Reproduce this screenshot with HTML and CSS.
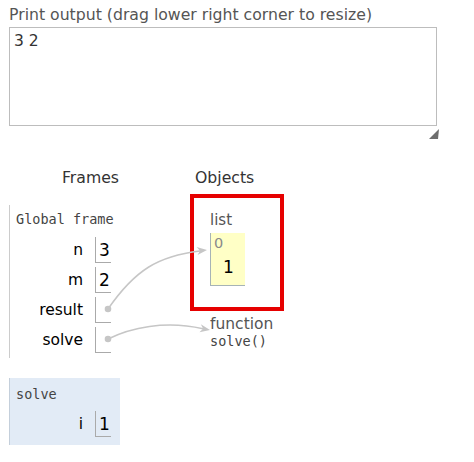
FILE: index.html
```html
<!DOCTYPE html>
<html>
<head>
<meta charset="utf-8">
<link rel="stylesheet" href="styles.css">
</head>
<body>
<div class="page">
  <div class="out-label">Print output (drag lower right corner to resize)</div>
  <div class="out-box">3 2</div>
  <div class="grip-row">
    <svg class="grip" width="10" height="10" viewBox="0 0 10 10"><polygon points="10,0 9,10 0,10" fill="#6e6e6e"/></svg>
  </div>
  <div class="viz">
    <div class="frames-col">
      <div class="col-head frames-head">Frames</div>
      <div class="frame global">
        <div class="frame-head">Global frame</div>
        <div class="vars">
          <div class="name">n</div><div class="val">3</div>
          <div class="name">m</div><div class="val">2</div>
          <div class="name">result</div><div class="val"></div>
          <div class="name">solve</div><div class="val"></div>
        </div>
      </div>
      <div class="frame active">
        <div class="frame-head">solve</div>
        <div class="vars">
          <div class="name">i</div><div class="val">1</div>
        </div>
      </div>
    </div>
    <div class="objects-col">
      <div class="col-head objects-head">Objects</div>
      <div class="highlight">
        <div class="type-label">list</div>
        <div class="list-cell">
          <div class="idx">0</div>
          <div class="elt">1</div>
        </div>
      </div>
      <div class="func">
        <div class="type-label func-label">function</div>
        <div class="func-name">solve()</div>
      </div>
    </div>
  </div>
</div>
<svg class="arrows" width="474" height="462" viewBox="0 0 474 462">
  <g fill="none" stroke="#c6c6c6" stroke-width="1.5">
    <path d="M108,309 C135,270 158,256 200,251"/>
    <path d="M108,339 C130,328 165,320 203,328.8"/>
  </g>
  <g fill="#c6c6c6">
    <circle cx="108" cy="309" r="3.3"/>
    <circle cx="108" cy="339" r="3.3"/>
    <polygon points="207,250 196.6,247.1 200,250.8 197.5,255.1"/>
    <polygon points="210,330 200.85,324.3 203.1,328.8 199.45,332.2"/>
  </g>
</svg>
</body>
</html>
```
FILE: styles.css
```css
html, body {
  margin: 0;
  padding: 0;
  background: #ffffff;
}
body {
  font-family: "DejaVu Sans", Verdana, sans-serif;
  color: #000;
}
.page {
  padding: 6px 0 0 9px;
}
.out-label {
  font-size: 15.7px;
  line-height: 18px;
  color: #555;
}
.out-box {
  margin-top: 3px;
  width: 428px;
  height: 99px;
  box-sizing: border-box;
  border: 1px solid #bdbdbd;
  padding: 4px 3px 4px 4px;
  font-size: 15.5px;
  line-height: 18px;
  color: #333;
}
.grip-row {
  width: 430px;
  height: 10px;
  margin-top: 3px;
  display: flex;
  justify-content: flex-end;
}
.grip {
  display: block;
}
.viz {
  margin-top: 30px;
  display: flex;
  align-items: flex-start;
}
.frames-col {
  width: 163px;
  display: flex;
  flex-direction: column;
}
.col-head {
  font-size: 15.7px;
  line-height: 18px;
  color: #333;
}
.frames-head {
  text-align: center;
}
.objects-head {
  padding-left: 5px;
}
.frame {
  width: 111px;
  box-sizing: border-box;
  border-left: 1px solid #cccccc;
}
.frame.global {
  margin-top: 18px;
  padding: 6px 0 5px 0;
}
.frame.active {
  margin-top: 20px;
  padding: 8px 0 8px 0;
  background: #e2ebf6;
  border-left-color: #c4cfdb;
}
.frame-head {
  font-family: "DejaVu Sans Mono", monospace;
  font-size: 13.5px;
  line-height: 16px;
  color: #444;
  padding-left: 6px;
  white-space: nowrap;
}
.vars {
  display: grid;
  grid-template-columns: 73px 16px;
  column-gap: 12px;
  row-gap: 4px;
  margin-top: 10px;
}
.frame.active .vars {
  margin-top: 9px;
}
.name {
  text-align: right;
  font-size: 15.5px;
  line-height: 23px;
  padding-top: 2px;
  height: 26px;
  box-sizing: border-box;
  white-space: nowrap;
}
.val {
  height: 26px;
  box-sizing: border-box;
  border-left: 1px solid #aaaaaa;
  border-bottom: 1px solid #aaaaaa;
  padding: 2px 0 0 3px;
  font-size: 17px;
  line-height: 23px;
  white-space: nowrap;
}
.objects-col {
  margin-left: 18px;
  display: flex;
  flex-direction: column;
}
.highlight {
  margin-top: 7px;
  width: 94px;
  height: 117px;
  box-sizing: border-box;
  border: 4px solid #e60000;
  padding: 14px 0 0 16px;
}
.type-label {
  font-size: 15px;
  line-height: 17px;
  color: #555;
}
.list-cell {
  margin-top: 4px;
  width: 35px;
  height: 53px;
  box-sizing: border-box;
  background: #ffffc6;
  border-left: 1px solid #a6b3b6;
  border-bottom: 1px solid #a6b3b6;
  padding: 2px 0 0 3px;
}
.idx {
  font-size: 14.5px;
  line-height: 17px;
  color: #8a8a8a;
}
.elt {
  margin-top: 5px;
  padding-left: 9px;
  font-size: 17px;
  line-height: 20px;
  color: #000;
}
.func {
  margin-top: 4px;
  padding-left: 20px;
}
.func-label {
  font-size: 15.5px;
  line-height: 18px;
}
.func-name {
  font-family: "DejaVu Sans Mono", monospace;
  font-size: 13.5px;
  line-height: 17px;
  color: #444;
}
.arrows {
  position: absolute;
  left: 0;
  top: 0;
  pointer-events: none;
}
```
